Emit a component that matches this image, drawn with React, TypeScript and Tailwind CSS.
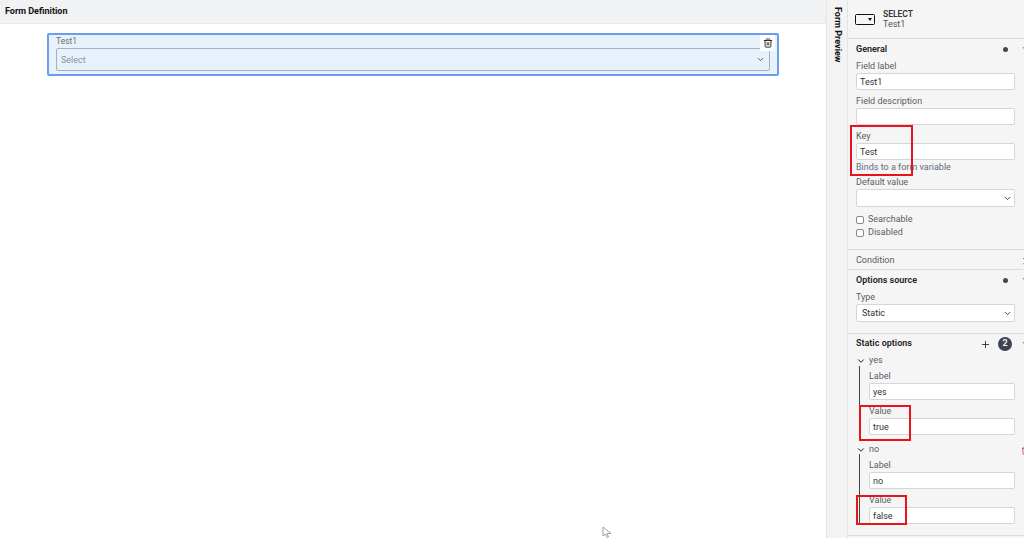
import type { ReactNode } from "react";
import { ChevronDown, ChevronRight, Plus, Trash2 } from "lucide-react";

const FONT = "font-['Roboto','Liberation_Sans',sans-serif]";

function Field({ label, value, top = "mt-0", width = "w-[159px]", pad = "px-[3px]" }: { label: string; value: string; top?: string; width?: string; pad?: string }) {
  return (
    <div className={`${top} ${width}`}>
      <div className="h-[14px] text-[9px] leading-[15px] text-[#5a5d63]">{label}</div>
      <div className={`flex h-[17px] items-center rounded-[2px] border border-[#d5d6da] bg-white pt-[2px] ${pad} text-[9px] text-[#333]`}>
        {value}
      </div>
    </div>
  );
}

function SelectBox({ value }: { value: string }) {
  return (
    <div className="flex h-[18px] w-[159px] items-center justify-between rounded-[2px] border border-[#d5d6da] bg-white pl-[5px] pr-[2px] text-[9px] text-[#333]">
      <span className="pt-[1px]">{value}</span>
      <ChevronDown size={9} strokeWidth={2.2} className="text-[#222]" />
    </div>
  );
}

function Check({ label }: { label: string }) {
  return (
    <div className="flex h-[13px] items-center gap-[4px] text-[9px] text-[#5a5d63]">
      <span className="h-[8px] w-[8px] rounded-[2px] border border-[#888] bg-white" />
      {label}
    </div>
  );
}

function OptionGroup({ name, valueText, line, children }: { name: string; valueText: string; line: string; children?: ReactNode }) {
  return (
    <div className="relative">
      <div className="flex h-[14px] w-[175px] items-center text-[9px] text-[#5a5d63]">
        <ChevronDown size={10} strokeWidth={2.4} className="text-[#222]" />
        <span className="ml-[3px]">{name}</span>
        {children}
      </div>
      <div className="ml-[13px] pt-[1px]">
        <Field label="Label" value={name} width="w-[146px]" />
        <Field label="Value" value={valueText} top="mt-[4px]" width="w-[146px]" />
      </div>
      <div className={`absolute left-[3px] w-px bg-[#444] ${line}`} />
    </div>
  );
}

function SectionHead({ title }: { title: string }) {
  return (
    <div className="flex h-[14px] w-[175px] items-center text-[9px] font-semibold text-[#222]">
      <span className="pt-[2px]">{title}</span>
      <span className="ml-auto h-[5px] w-[5px] rounded-full bg-[#44474f]" />
      <ChevronDown size={10} strokeWidth={2.4} className="ml-[13px] text-[#222]" />
    </div>
  );
}

export default function App() {
  return (
    <div className={`${FONT} relative flex h-[538px] w-[1024px] overflow-hidden bg-white`}>
      <main className="flex w-[826px] flex-col">
        <div className="flex h-[24px] items-center border-b border-[#e8e9eb] bg-[#f1f2f4] pl-[5px] text-[9px] font-bold text-[#111]">
          Form Definition
        </div>
        <div className="pl-[47px] pt-[9px]">
          <div className="relative h-[43px] w-[732px] rounded-[2px] border-2 border-[#6a9df0] bg-[#e8f2fd] px-[7px]">
            <div className="h-[13px] text-[8.5px] leading-[12px] text-[#6f6f6f]">Test1</div>
            <div className="flex h-[23px] items-center justify-between rounded-[2px] border border-[#a9b0b9] pl-[4px] pr-[4px] text-[9px] text-[#8d9199]">
              <span className="pt-[2px]">Select</span>
              <ChevronDown size={9} strokeWidth={2} className="text-[#333]" />
            </div>
            <div className="absolute right-[2px] top-0 flex h-[16px] w-[15px] items-center justify-center bg-white">
              <Trash2 size={10} strokeWidth={2.2} className="text-[#222]" />
            </div>
          </div>
        </div>
      </main>

      <div className="flex w-[22px] justify-center border-x border-[#e3e4e7] bg-[#f3f3f4] pt-[7px]">
        <span className="text-[9px] font-bold text-[#111] [writing-mode:vertical-rl]">Form Preview</span>
      </div>

      <aside className="w-[176px] shrink-0 overflow-hidden bg-[#f5f5f5]">
        <div className="flex h-[39px] items-center border-b border-[#dcdde0] pl-[7px]">
          <svg width="20" height="11" viewBox="0 0 20 11" className="mr-[8px]">
            <rect x="0.5" y="0.5" width="19" height="10" rx="1" fill="none" stroke="#111" />
            <path d="M13 4h4l-2 3z" fill="#111" />
          </svg>
          <div className="leading-[10px]">
            <div className="text-[8.5px] font-semibold text-[#333]">SELECT</div>
            <div className="text-[9px] text-[#555]">Test1</div>
          </div>
        </div>

        <section className="h-[211px] border-b border-[#dcdde0] pl-[8px] pt-[3px]">
          <SectionHead title="General" />
          <Field label="Field label" value="Test1" top="mt-[3px]" />
          <Field label="Field description" value="" top="mt-[4px]" />
          <Field label="Key" value="Test" top="mt-[4px]" />
          <div className="h-[13px] text-[9px] leading-[15px] text-[#5f6b7a]">Binds to a form variable</div>
          <div className="mt-[2px] h-[14px] text-[9px] leading-[15px] text-[#5a5d63]">Default value</div>
          <SelectBox value="" />
          <div className="mt-[6px]">
            <Check label="Searchable" />
            <Check label="Disabled" />
          </div>
        </section>

        <section className="flex h-[20px] items-center justify-between border-b border-[#dcdde0] pl-[8px] pt-[2px] text-[9px] text-[#5a5d63]">
          <span>Condition</span>
          <ChevronRight size={10} strokeWidth={2.2} className="mr-[-6px] text-[#222]" />
        </section>

        <section className="h-[64px] border-b border-[#dcdde0] pl-[8px] pt-[3px]">
          <SectionHead title="Options source" />
          <div className="mt-[3px] h-[14px] text-[9px] leading-[15px] text-[#5a5d63]">Type</div>
          <SelectBox value="Static" />
        </section>

        <section className="h-[202px] border-b border-[#dcdde0] pl-[8px] pt-[3px]">
          <div className="flex h-[14px] w-[175px] items-center text-[9px] font-semibold text-[#222]">
            <span>Static options</span>
            <Plus size={11} strokeWidth={1.8} className="ml-auto text-[#222]" />
            <span className="ml-[7px] flex h-[14px] w-[14px] items-center justify-center rounded-full bg-[#3f4250] text-[9px] text-white">2</span>
            <ChevronDown size={10} strokeWidth={2.4} className="ml-[9px] text-[#222]" />
          </div>
          <div className="mt-[3px]">
            <OptionGroup name="yes" valueText="true" line="top-[12px] h-[74px]" />
          </div>
          <div className="mt-[8px]">
            <OptionGroup name="no" valueText="false" line="top-[11px] h-[71px]">
              <Trash2 size={9} className="ml-auto mr-[1px] text-[#c0392b]" />
            </OptionGroup>
          </div>
        </section>
      </aside>

      {/* red annotation boxes drawn over the screenshot */}
      <div className="absolute left-[850px] top-[125px] h-[51px] w-[63px] border-2 border-[#e8141c]" />
      <div className="absolute left-[859px] top-[405px] h-[36px] w-[52px] border-2 border-[#e8141c]" />
      <div className="absolute left-[856px] top-[495px] h-[30px] w-[51px] border-2 border-[#e8141c]" />

      {/* mouse pointer */}
      <svg width="10" height="13" viewBox="0 0 10 13" className="absolute left-[602px] top-[526px]">
        <path d="M1 1v9l2.5-2 1.5 3.5 1.5-.6-1.5-3.4H9z" fill="#fff" stroke="#8a8a8a" strokeWidth="0.8" />
      </svg>
    </div>
  );
}
